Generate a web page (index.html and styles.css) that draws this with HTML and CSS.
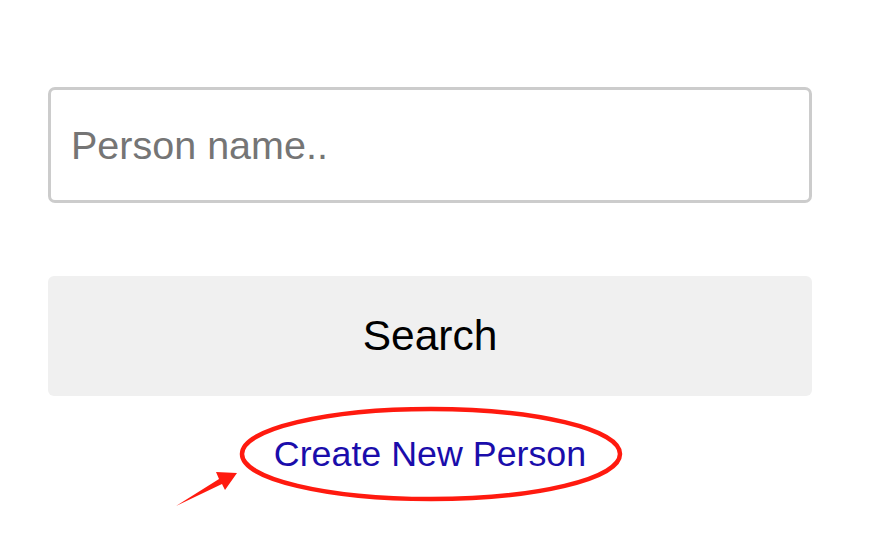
FILE: index.html
```html
<!DOCTYPE html>
<html>
<head>
<meta charset="utf-8">
<link rel="stylesheet" href="styles.css">
</head>
<body>
<div class="page">
  <form class="search-form">
    <input class="name-input" type="text" placeholder="Person name..">
    <button class="search-btn" type="button">Search</button>
    <div class="link-row">
      <a class="create-link" href="#">Create New Person</a>
      <svg class="annotation" width="890" height="560" viewBox="0 0 890 560">
        <ellipse cx="431" cy="454" rx="189" ry="45" fill="none" stroke="#ff1a0f" stroke-width="4.5"/>
        <polygon points="176,506 219,479 216,472 237,473 225,490 222,484" fill="#ff1a0f"/>
      </svg>
    </div>
  </form>
</div>
</body>
</html>
```

FILE: styles.css
```css
html, body {
  margin: 0;
  padding: 0;
  background: #ffffff;
}
.page {
  position: relative;
  width: 890px;
  height: 560px;
  padding: 87px 0 0 48px;
  box-sizing: border-box;
  font-family: "Liberation Sans", Arial, sans-serif;
}
.search-form {
  display: flex;
  flex-direction: column;
  width: 764px;
}
.name-input {
  box-sizing: border-box;
  height: 116px;
  border: 3px solid #cccccc;
  border-radius: 7px;
  padding: 0 20px;
  font-family: "Liberation Sans", Arial, sans-serif;
  font-size: 39.5px;
  color: #222;
  outline: none;
}
.name-input::placeholder {
  color: #757575;
}
.search-btn {
  margin-top: 73px;
  height: 120px;
  border: none;
  border-radius: 6px;
  background: #f0f0f0;
  font-family: "Liberation Sans", Arial, sans-serif;
  font-size: 42.5px;
  color: #000;
  padding: 0;
}
.link-row {
  display: flex;
  justify-content: center;
  padding-top: 37px;
}
.create-link {
  font-size: 35.8px;
  color: #1a0dab;
  text-decoration: none;
  line-height: 42px;
}
.annotation {
  position: absolute;
  left: 0;
  top: 0;
  pointer-events: none;
}
```
